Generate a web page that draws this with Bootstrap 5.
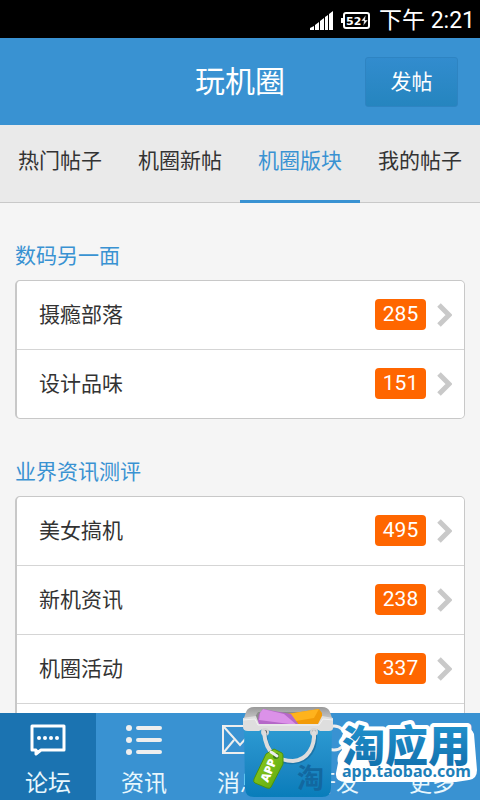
<!DOCTYPE html>
<html lang="zh-CN">
<head>
<meta charset="utf-8">
<meta name="viewport" content="width=device-width, initial-scale=1">
<title>玩机圈</title>
<link rel="stylesheet" href="https://cdn.jsdelivr.net/npm/bootstrap@5.3.0/dist/css/bootstrap.min.css">
<style>
  body { font-family: Roboto, "Noto Sans CJK SC", sans-serif; font-size: 21px; line-height: 32px; color: #333; background: #f5f5f5; }
  .status-bar { height: 38px; background: #000; color: #fff; font-size: 23px; padding-right: 5px; }
  .title-bar { background: #3992d2; height: 87px; color: #fff; }
  .title-bar h1 { font-size: 30px; line-height: 40px; }
  .title-action { padding-right: 22px; }
  .post-btn { width: 93px; height: 50px; color: #fff; font-size: 21px; line-height: 32px; background: linear-gradient(#328cce, #2585bf); border: 1px solid #2e84c2; border-radius: 3px; }
  .post-btn:hover { color: #fff; background: #2585bf; }
  .tab-bar { background: #eaeaea; box-shadow: inset 0 -1px #c9c9c9; height: 78px; }
  .tab-bar .nav-link { color: #333; padding: 20px 0 23px; border-bottom: 3px solid transparent; border-radius: 0; }
  .tab-bar .nav-link.active { color: #3992d2; border-color: #3992d2; }
  .boards { padding: 0 15px; }
  .boards h2 { font-size: 21px; line-height: 32px; color: #3992d2; margin: 37px 0 8px; }
  .board-list { border: 1px solid #c8c8c8; border-left-width: 2px; border-radius: 5px; background: #fff; }
  .board-list .list-group-item { color: #333; background: #fff; border: 0; border-bottom: 1px solid #d5d5d5; height: 69px; padding: 0 12px 1px 22px; }
  .board-list .list-group-item:last-child { border-bottom: 0; height: 68px; }
  .board-count { width: 51px; height: 31px; background: #f60; border-radius: 4px; font-size: 21px; line-height: 31px; font-weight: 400; padding: 0; margin-right: 11px; }
  .bottom-bar { background: #3992d2; height: 87px; }
  .bottom-bar a { color: #e8f7fd; font-size: 23px; padding: 9px 0 0; border-radius: 0; }
  .bottom-bar a.active { color: #e8f7fd; background: #1b73b1; }
  .bottom-bar svg { margin-bottom: 10px; }
  .store-mark { right: 0; bottom: 0; pointer-events: none; }
  .store-mark .outlined { paint-order: stroke; stroke: #fff; stroke-linejoin: round; }
</style>
<script src="https://cdn.jsdelivr.net/npm/bootstrap@5.3.0/dist/js/bootstrap.bundle.min.js"></script>
</head>
<body class="d-flex flex-column vh-100 overflow-hidden position-relative">
<svg class="d-none" aria-hidden="true">
  <symbol id="chevron" viewBox="0 0 15 24"><path d="M2 2l10 10L2 22" fill="none" stroke="#c9c9c9" stroke-width="5"/></symbol>
</svg>

<div class="status-bar d-flex align-items-center justify-content-end flex-shrink-0">
  <svg class="mt-1" width="24" height="20" viewBox="0 0 24 20" fill="#fff" aria-hidden="true"><path d="M1 19v-2l4-2v4zM6 19v-5l4-3v8zM11 19v-9l4-3v12zM16 19V6l3-2v15zM20 19V3l4-3v19z"/></svg>
  <svg class="mt-1 ms-2" width="30" height="20" viewBox="0 0 30 20" aria-label="52%"><rect x="3" y="2" width="25" height="15" rx="2" fill="none" stroke="#fff" stroke-width="2"/><path d="M0 7h3v5H0z" fill="#fff"/><text x="5" y="14" font-family="DejaVu Sans, sans-serif" font-weight="700" font-size="11" fill="#fff">52</text><path d="M25 4l-5 6h3l-1 5 5-6h-3z" fill="#fff" stroke="#000" stroke-width=".5"/></svg>
  <span class="ms-2 pt-1">下午 2:21</span>
</div>

<header class="title-bar row g-0 align-items-center flex-shrink-0">
  <h1 class="col-4 offset-4 mb-0 text-center fw-normal">玩机圈</h1>
  <div class="col-4 text-end title-action"><button type="button" class="btn p-0 post-btn">发帖</button></div>
</header>

<nav class="tab-bar nav nav-fill flex-nowrap flex-shrink-0">
  <a class="nav-link flex-fill" href="#hot">热门帖子</a>
  <a class="nav-link flex-fill" href="#new">机圈新帖</a>
  <a class="nav-link flex-fill active" aria-current="page" href="#boards">机圈版块</a>
  <a class="nav-link flex-fill" href="#mine">我的帖子</a>
</nav>

<main class="boards flex-fill overflow-hidden">
  <h2 class="fw-normal">数码另一面</h2>
  <div class="list-group board-list">
    <a href="#b1" class="list-group-item d-flex align-items-center"><span class="me-auto">摄瘾部落</span><span class="badge board-count">285</span><svg width="15" height="24" aria-hidden="true"><use href="#chevron"/></svg></a>
    <a href="#b2" class="list-group-item d-flex align-items-center"><span class="me-auto">设计品味</span><span class="badge board-count">151</span><svg width="15" height="24" aria-hidden="true"><use href="#chevron"/></svg></a>
  </div>
  <h2 class="fw-normal">业界资讯测评</h2>
  <div class="list-group board-list">
    <a href="#b3" class="list-group-item d-flex align-items-center"><span class="me-auto">美女搞机</span><span class="badge board-count">495</span><svg width="15" height="24" aria-hidden="true"><use href="#chevron"/></svg></a>
    <a href="#b4" class="list-group-item d-flex align-items-center"><span class="me-auto">新机资讯</span><span class="badge board-count">238</span><svg width="15" height="24" aria-hidden="true"><use href="#chevron"/></svg></a>
    <a href="#b5" class="list-group-item d-flex align-items-center"><span class="me-auto">机圈活动</span><span class="badge board-count">337</span><svg width="15" height="24" aria-hidden="true"><use href="#chevron"/></svg></a>
    <div class="list-group-item"></div>
  </div>
</main>

<nav class="bottom-bar nav nav-fill flex-nowrap flex-shrink-0">
  <a class="nav-link nav-item d-flex flex-column align-items-center active" href="#forum">
    <svg width="38" height="36" viewBox="0 0 38 36" aria-hidden="true"><path d="M3 4h32v24H12l-5 4v-4H3z" fill="none" stroke="#fff" stroke-width="3" stroke-linejoin="round"/><path d="M7 28h6l-6 5z" fill="#fff"/><g fill="#fff"><circle cx="10" cy="16" r="2"/><circle cx="16" cy="16" r="2"/><circle cx="22" cy="16" r="2"/><circle cx="28" cy="16" r="2"/></g></svg>
    论坛</a>
  <a class="nav-link nav-item d-flex flex-column align-items-center" href="#news">
    <svg width="38" height="36" viewBox="0 0 38 36" aria-hidden="true" fill="#eee"><circle cx="4" cy="6" r="3"/><circle cx="4" cy="18" r="3"/><circle cx="4" cy="30" r="3"/><path d="M13 6h22M13 18h22M13 30h22" stroke="#eee" stroke-width="4" stroke-linecap="round"/></svg>
    资讯</a>
  <a class="nav-link nav-item d-flex flex-column align-items-center" href="#messages">
    <svg width="38" height="36" viewBox="0 0 38 36" aria-hidden="true" fill="none" stroke="#eee" stroke-width="2"><path d="M2 4h34v27H2zM3 5l16 18L35 5M3 30l10-12M35 30L25 18"/></svg>
    消息</a>
  <a class="nav-link nav-item d-flex flex-column align-items-center" href="#discover">
    <svg width="38" height="36" viewBox="0 0 38 36" aria-hidden="true" fill="none" stroke="#eee" stroke-width="3"><circle cx="17" cy="16" r="12"/><path d="M26 25l8 8"/></svg>
    开发</a>
  <a class="nav-link nav-item d-flex flex-column align-items-center" href="#more">
    <svg width="38" height="36" viewBox="0 0 38 36" aria-hidden="true" fill="#eee"><circle cx="7" cy="18" r="3"/><circle cx="19" cy="18" r="3"/><circle cx="31" cy="18" r="3"/></svg>
    更多</a>
</nav>

<svg class="store-mark position-absolute" width="240" height="100" viewBox="0 0 240 100" aria-label="淘应用 app.taobao.com">
  <defs>
    <linearGradient id="bagFill" x1="0" y1="0" x2="0" y2="1"><stop offset="0" stop-color="#2d9bd3"/><stop offset=".6" stop-color="#1c87c3"/><stop offset="1" stop-color="#087dba"/></linearGradient>
    <linearGradient id="rimFill" x1="0" y1="0" x2="0" y2="1"><stop offset="0" stop-color="#999"/><stop offset=".6" stop-color="#c5c5c5"/><stop offset="1" stop-color="#e4e4e4"/></linearGradient>
    <linearGradient id="inkFill" x1="0" y1="0" x2="0" y2="1"><stop offset="0" stop-color="#239ad4"/><stop offset="1" stop-color="#116ca9"/></linearGradient>
    <linearGradient id="tagFill" x1="0" y1="0" x2="1" y2="1"><stop offset="0" stop-color="#96ce22"/><stop offset="1" stop-color="#59a80c"/></linearGradient>
  </defs>
  <path d="M14 7h68q6 0 8 5l3 9-10 5H13L3 21l3-9q2-5 8-5z" fill="url(#rimFill)"/>
  <path d="M18 12h59l6 6-5 7H18l-3-8z" fill="#8c8c8c"/>
  <path d="M40 15l39-6 3 4v8l-3 4H42z" fill="#f29b08"/><path d="M42 15l37-6-5 9-24 4z" fill="#ffb31d"/>
  <path d="M23 9l28 5 8 11H17l2-11z" fill="#b568c8"/><path d="M23 9l21 5 13 11-38-5 1-7z" fill="#db91e8"/>
  <path d="M4 27h88l-1 61q0 9-9 9H14q-9 0-9-9z" fill="url(#bagFill)"/>
  <path d="M3 18l13-2 3 8h59l4-8 11 2v10q0 3-4 3h-9q-5-4-11 0H30q-5-4-11 0H8q-5 0-5-4z" fill="#dedede"/>
  <path d="M3 20l12-1 3 6h61l4-6 10 1" fill="none" stroke="#f2f2f2" stroke-width="1"/>
  <g fill="#555" stroke="#d5d5d5" stroke-width="2"><circle cx="25" cy="32" r="3"/><circle cx="74" cy="32" r="3"/></g>
  <path d="M25 34C26 46 30 53 37 58Q43 63 54 62C69 61 76 48 75 35" fill="none" stroke="#155e8c" stroke-width="4" opacity=".5"/>
  <path d="M24 32C25 44 28 50 34 55Q42 61 53 61C68 60 75 46 74 32" fill="none" stroke="#ddd" stroke-width="4" stroke-linecap="round"/>
  <path d="M34 49l8 4q1 1 1 3v8L31 87q-1 2-4 1l-12-5q-2-1-1-4l12-25z" fill="url(#tagFill)" stroke="#4b920d" stroke-width="1"/>
  <circle cx="36" cy="56" r="3" fill="#3e7d15"/><path d="M31 52l6 4" stroke="#eee" stroke-width="3" stroke-linecap="round"/>
  <text transform="translate(28 83) rotate(-68)" font-family="Open Sans, sans-serif" font-size="12" font-weight="800" fill="#fff">APP</text>
  <text x="57" y="88" font-family="Noto Sans CJK SC, sans-serif" font-size="27" font-weight="700" fill="#1268a0">淘</text>
  <path d="M107 27q4-3 9 1h110q6 0 8 6l3 36q0 9-8 10l-13 2H106q-11 0-10-9l2-10q-2-7 4-13-2-10 1-17 0-4 4-6z" fill="#fff"/>
  <text class="outlined" x="102" y="62" font-family="Noto Sans CJK SC, sans-serif" font-size="43" font-weight="900" fill="url(#inkFill)" stroke-width="8">淘应用</text>
  <text x="102" y="77" font-family="Noto Sans, sans-serif" font-size="16" font-weight="700" fill="#1d7fb9">app.taobao.com</text>
</svg>
</body>
</html>
